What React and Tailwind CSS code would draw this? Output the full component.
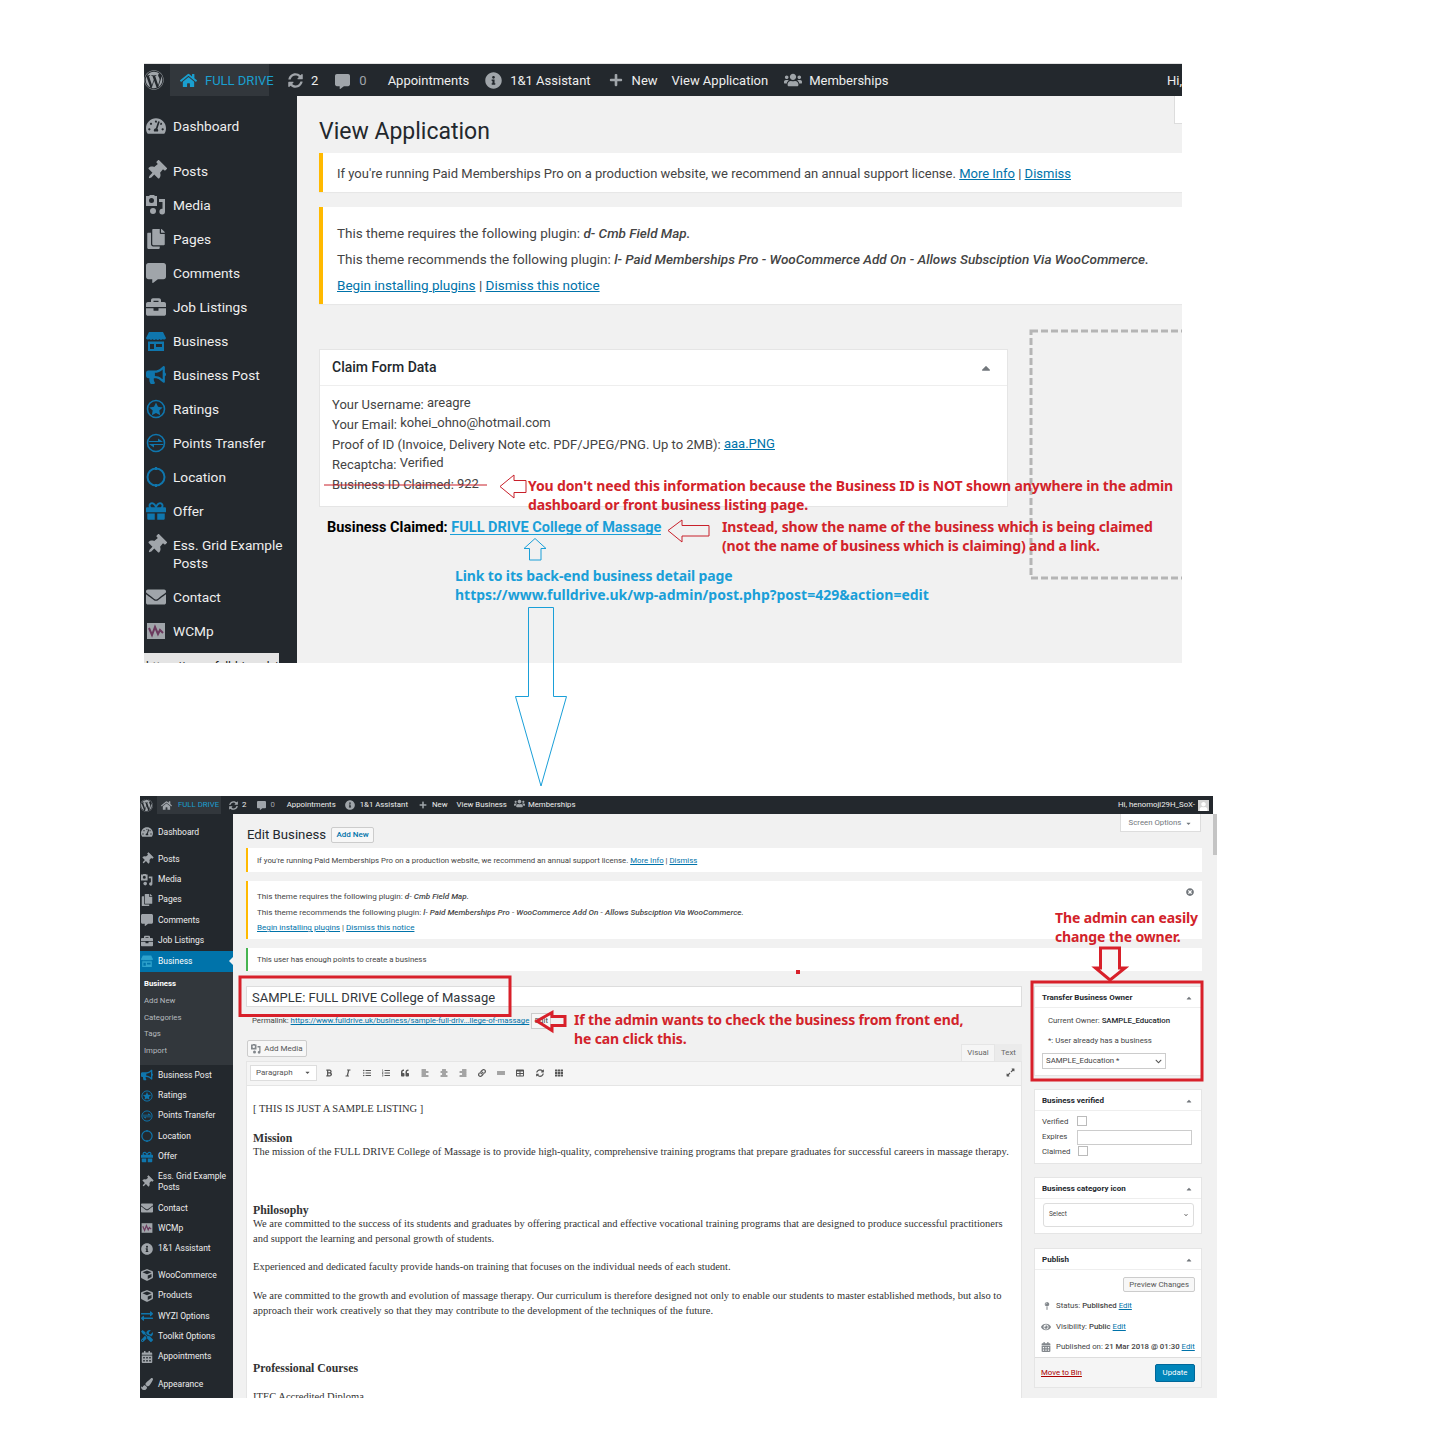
import React from "react";
import {
  FaWordpress, FaHome, FaSyncAlt, FaInfoCircle, FaPlus, FaUsers, FaTachometerAlt,
  FaThumbtack, FaCopy, FaCommentAlt, FaBriefcase, FaBullhorn, FaExchangeAlt,
  FaGift, FaEnvelope, FaCube, FaTools, FaCalendarAlt, FaPaintBrush, FaBold, FaItalic, FaListUl,
  FaListOl, FaQuoteLeft, FaAlignLeft, FaAlignCenter, FaAlignRight, FaLink, FaTable, FaTh,
  FaGripLines, FaExpandAlt, FaTimesCircle, FaEye, FaMapPin, FaCaretUp, FaCaretDown, FaChevronDown, FaUser,
} from "react-icons/fa";

function MediaIcon({ className }) {
  return (
    <svg viewBox="0 0 20 20" className={className} fill="currentColor">
      <path d="M0 1h3l1-1h4l1 1h2v10H0zM5.500 3a2.500 2.500 0 1 0 0 5 2.500 2.500 0 0 0 0-5z" fillRule="evenodd" />
      <circle cx="7" cy="16" r="3" />
      <path d="M13 4h6v12.500a2.800 2.800 0 1 1-2.500-2.700V7H13z" />
    </svg>
  );
}

function StoreIcon({ className }) {
  return (
    <svg viewBox="0 0 20 20" className={className} fill="currentColor">
      <path d="M3 1h14l3 6a2 2 0 0 1-3.300 1 2 2 0 0 1-3.300 0 2 2 0 0 1-3.400 0 2 2 0 0 1-3.400 0 2 2 0 0 1-3.300 0A2 2 0 0 1 0 7z" />
      <path d="M2 10.500h16V20H2zM4 13v5h4v-5zm6 0v3h6v-3z" fillRule="evenodd" />
    </svg>
  );
}

function WaveIcon({ className }) {
  return (
    <svg viewBox="0 0 20 20" className={className}>
      <rect x="1" y="2" width="18" height="16" fill="currentColor" />
      <path d="M3 7l3 7 3-8 3 7 2-4 3 3" fill="none" stroke="#6b3a5e" strokeWidth="2" />
    </svg>
  );
}

function RingIcon({ className, kind }) {
  return (
    <svg viewBox="0 0 20 20" className={className} fill="currentColor">
      <circle cx="10" cy="10" r="8.500" fill="none" stroke="currentColor" strokeWidth={kind === "loc" ? 2 : 1.600} />
      {kind === "star" && <path d="M10 3.500l2 4.300 4.700.6-3.400 3.200.9 4.700-4.200-2.300-4.200 2.300.9-4.700-3.400-3.200 4.700-.6z" />}
      {kind === "arrows" && <path d="M3 8h9V5.500l5 3.500H3zM17 12H8v2.500L3 11h14z" />}
      {kind === "loc" && <path d="M9 0h2v3H9zM9 17h2v3H9z" />}
    </svg>
  );
}

const gray = "text-[#a0a5aa]";
const blue = "text-[#0f76ad]";

const bigMenu = [
  { label: "Dashboard", Icon: FaTachometerAlt, color: gray, rowClass: "h-[34px] mt-[13px] mb-[11px]" },
  { label: "Posts", Icon: FaThumbtack, color: `${gray} rotate-45` },
  { label: "Media", Icon: MediaIcon, color: gray },
  { label: "Pages", Icon: FaCopy, color: gray },
  { label: "Comments", Icon: FaCommentAlt, color: gray },
  { label: "Job Listings", Icon: FaBriefcase, color: gray },
  { label: "Business", Icon: StoreIcon, color: blue },
  { label: "Business Post", Icon: FaBullhorn, color: blue },
  { label: "Ratings", Icon: RingIcon, kind: "star", color: blue },
  { label: "Points Transfer", Icon: RingIcon, kind: "arrows", color: blue },
  { label: "Location", Icon: RingIcon, kind: "loc", color: blue },
  { label: "Offer", Icon: FaGift, color: blue },
  { label: "Ess. Grid Example Posts", Icon: FaThumbtack, color: `${gray} rotate-45`, rowClass: "h-[52px] items-start !pt-[8px]" },
  { label: "Contact", Icon: FaEnvelope, color: gray },
  { label: "WCMp", Icon: WaveIcon, color: gray },
];

const smallTop = [
  { label: "Dashboard", Icon: FaTachometerAlt, color: gray, rowClass: "h-[20px] mt-[8px] mb-[7px]" },
  { label: "Posts", Icon: FaThumbtack, color: `${gray} rotate-45` },
  { label: "Media", Icon: MediaIcon, color: gray },
  { label: "Pages", Icon: FaCopy, color: gray },
  { label: "Comments", Icon: FaCommentAlt, color: gray },
  { label: "Job Listings", Icon: FaBriefcase, color: gray },
];

const smallBottom = [
  { label: "Business Post", Icon: FaBullhorn, color: blue },
  { label: "Ratings", Icon: RingIcon, kind: "star", color: blue },
  { label: "Points Transfer", Icon: RingIcon, kind: "arrows", color: blue },
  { label: "Location", Icon: RingIcon, kind: "loc", color: blue },
  { label: "Offer", Icon: FaGift, color: blue },
  { label: "Ess. Grid Example Posts", Icon: FaThumbtack, color: `${gray} rotate-45`, rowClass: "h-[31px]" },
  { label: "Contact", Icon: FaEnvelope, color: gray },
  { label: "WCMp", Icon: WaveIcon, color: gray },
  { label: "1&1 Assistant", Icon: FaInfoCircle, color: gray },
  { label: "WooCommerce", Icon: FaCube, color: gray, rowClass: "h-[20.4px] mt-[6px]" },
  { label: "Products", Icon: FaCube, color: gray },
  { label: "WYZI Options", Icon: FaExchangeAlt, color: blue },
  { label: "Toolkit Options", Icon: FaTools, color: blue },
  { label: "Appointments", Icon: FaCalendarAlt, color: gray },
  { label: "Appearance", Icon: FaPaintBrush, color: gray, rowClass: "h-[20.4px] mt-[7px]" },
];

function BigItem({ item }) {
  const { label, Icon, color, kind, rowClass } = item;
  return (
    <div className={`flex items-center text-[#eeeeee] text-[13.700px] leading-[18px] ${rowClass || "h-[34px]"}`}>
      <div className="w-[29px] h-[18px] shrink-0 flex items-center justify-center pr-[6px]">
        <Icon className={`w-[20px] h-[20px] shrink-0 ${color}`} kind={kind} />
      </div>
      <span>{label}</span>
    </div>
  );
}

function SmallItem({ item }) {
  const { label, Icon, color, kind, rowClass } = item;
  return (
    <div className={`flex items-center text-[#eeeeee] text-[8.500px] leading-[11px] ${rowClass || "h-[20.4px]"}`}>
      <div className="w-[18px] h-[11px] shrink-0 flex items-center justify-center pr-[4px]">
        <Icon className={`w-[12px] h-[12px] shrink-0 ${color}`} kind={kind} />
      </div>
      <span>{label}</span>
    </div>
  );
}

function BigBar() {
  return (
    <div className="h-[32px] bg-[#23282d] flex items-center text-[13px] text-[#eeeeee] shrink-0 whitespace-nowrap [&_span]:mt-[2px]">
      <FaWordpress className="w-[20px] h-[20px] text-[#a0a5aa] ml-0" />
      <div className="ml-[6px] w-[99px] h-[32px] bg-[#32373c] flex items-center text-[#1a9fcf]">
        <FaHome className="w-[17px] h-[17px] ml-[10px] shrink-0" />
        <span className="ml-[8px]">FULL DRIVE</span>
      </div>
      <FaSyncAlt className="w-[15px] h-[15px] ml-[19px] text-[#a0a5aa]" />
      <span className="ml-[8px]">2</span>
      <FaCommentAlt className="w-[15px] h-[15px] ml-[17px] mt-[2px] text-[#a0a5aa]" />
      <span className="ml-[9px] text-[#a0a5aa]">0</span>
      <span className="ml-[21px]">Appointments</span>
      <FaInfoCircle className="w-[17px] h-[17px] ml-[16px] text-[#a0a5aa]" />
      <span className="ml-[8px]">1&amp;1 Assistant</span>
      <FaPlus className="w-[14px] h-[14px] ml-[18px] text-[#a0a5aa]" />
      <span className="ml-[9px]">New</span>
      <span className="ml-[14px]">View Application</span>
      <FaUsers className="w-[18px] h-[18px] ml-[16px] text-[#a0a5aa]" />
      <span className="ml-[7px]">Memberships</span>
      <span className="ml-auto">Hi,</span>
    </div>
  );
}

function SmallBar() {
  return (
    <div className="h-[18px] bg-[#23282d] flex items-center text-[7.800px] text-[#eeeeee] shrink-0 whitespace-nowrap">
      <FaWordpress className="w-[13px] h-[13px] text-[#a0a5aa]" />
      <div className="ml-[4px] w-[64px] h-[18px] bg-[#32373c] flex items-center text-[#1a9fcf]">
        <FaHome className="w-[11px] h-[11px] ml-[4px] shrink-0 text-[#a0a5aa]" />
        <span className="ml-[6px]">FULL DRIVE</span>
      </div>
      <FaSyncAlt className="w-[9px] h-[9px] ml-[8px] text-[#a0a5aa]" />
      <span className="ml-[4px]">2</span>
      <FaCommentAlt className="w-[9px] h-[9px] ml-[11px] text-[#a0a5aa]" />
      <span className="ml-[4px] text-[#a0a5aa]">0</span>
      <span className="ml-[12px]">Appointments</span>
      <FaInfoCircle className="w-[10px] h-[10px] ml-[9px] text-[#a0a5aa]" />
      <span className="ml-[5px]">1&amp;1 Assistant</span>
      <FaPlus className="w-[8px] h-[8px] ml-[11px] text-[#a0a5aa]" />
      <span className="ml-[5px]">New</span>
      <span className="ml-[9px]">View Business</span>
      <FaUsers className="w-[11px] h-[11px] ml-[7px] -mt-[3px] text-[#a0a5aa]" />
      <span className="ml-[3px]">Memberships</span>
      <span className="ml-auto">Hi, henomoji29H_SoX-</span>
      <div className="ml-[3px] mr-[4px] w-[11px] h-[11px] bg-[#d5d5d5] flex items-end justify-center overflow-hidden">
        <FaUser className="w-[9px] h-[9px] text-white" />
      </div>
    </div>
  );
}

function TopFrame() {
  return (
    <div className="ml-[144px] w-[1038px] h-[600px] border-t border-[#e2e2e2] overflow-hidden flex flex-col">
      <BigBar />
      <div className="flex flex-1 min-h-0">
        <div className="w-[153px] shrink-0 bg-[#23282d]">
          {bigMenu.map((item) => (
            <BigItem key={item.label} item={item} />
          ))}
          <div className="mt-[5px] w-[135px] h-[20px] bg-[#e4e4e4] text-[#222] text-[12px] pt-[5px] pl-[2px] whitespace-nowrap">
            https://www.fulldrive.uk/
          </div>
        </div>
        <div className="flex-1 min-w-0 bg-[#f1f1f1] pl-[22px] text-[#444] text-[13.500px] relative">
          <div className="absolute right-0 top-0 w-[8px] h-[28px] bg-white border-l border-b border-[#ddd]" />
          <div className="h-[57px] pt-[15px] flex items-center text-[23px] text-[#23282d]">View Application</div>
          <div className="h-[39px] bg-white border-l-4 border-[#ffb900] pl-[14px] pt-[3px] flex items-center whitespace-nowrap text-[13px] shadow-[0_1px_1px_rgba(0,0,0,0.04)]">
            <span>
              If you're running Paid Memberships Pro on a production website, we recommend an annual support license.{" "}
              <a className="text-[#0073aa] underline">More Info</a> |{" "}
              <a className="text-[#0073aa] underline">Dismiss</a>
            </span>
          </div>
          <div className="mt-[15px] h-[97px] bg-white border-l-4 border-[#ffb900] pl-[14px] pt-[13px] leading-[26px] whitespace-nowrap shadow-[0_1px_1px_rgba(0,0,0,0.04)]">
            <p>This theme requires the following plugin: <em className="font-medium">d- Cmb Field Map.</em></p>
            <p>This theme recommends the following plugin: <em className="font-medium">l- Paid Memberships Pro - WooCommerce Add On - Allows Subsciption Via WooCommerce.</em></p>
            <p>
              <a className="text-[#0073aa] underline">Begin installing plugins</a> |{" "}
              <a className="text-[#0073aa] underline">Dismiss this notice</a>
            </p>
          </div>
          <div className="mt-[45px] w-[689px] h-[158px] bg-white border border-[#e5e5e5]">
            <div className="h-[36px] border-b border-[#eeeeee] px-[12px] flex items-center justify-between text-[14px] text-[#23282d] font-medium">
              <span>Claim Form Data</span>
              <FaCaretUp className="w-[14px] h-[14px] text-[#72777c] mr-[2px]" />
            </div>
            <div className="pt-[9px] pl-[12px] text-[13px] leading-[20px] whitespace-nowrap">
              <p>Your Username: <span className="relative -top-[2px]">areagre</span></p>
              <p>Your Email: <span className="relative -top-[2px]">kohei_ohno@hotmail.com</span></p>
              <p>
                Proof of ID (Invoice, Delivery Note etc. PDF/JPEG/PNG. Up to 2MB):{" "}
                <a className="relative -top-[1px] text-[#0073aa] underline">aaa.PNG</a>
              </p>
              <p>Recaptcha: <span className="relative -top-[2px]">Verified</span></p>
              <p>Business ID Claimed: <span className="relative -top-[1px]">922</span></p>
            </div>
          </div>
          <p className="ml-[8px] mt-[11px] text-[14.500px] leading-[20px] font-bold text-black whitespace-nowrap">
            Business Claimed: <span className="text-[#1a9fd8]">FULL DRIVE College of Massage</span>
          </p>
        </div>
      </div>
    </div>
  );
}

function Card({ title, className, children }) {
  return (
    <div className={`bg-white border border-[#e5e5e5] ${className}`}>
      <div className="h-[21px] border-b border-[#eeeeee] pl-[7px] pr-[8px] pt-px flex items-center justify-between text-[8px] font-bold text-[#23282d]">
        <span>{title}</span>
        <FaCaretUp className="w-[8px] h-[8px] text-[#72777c]" />
      </div>
      {children}
    </div>
  );
}

function EditorToolbar() {
  const icons = [FaBold, FaItalic, FaListUl, FaListOl, FaQuoteLeft, FaAlignLeft, FaAlignCenter, FaAlignRight, FaLink, FaGripLines, FaTable, FaSyncAlt, FaTh];
  return (
    <div className="h-[25px] bg-[#f5f5f5] border border-[#e5e5e5] pb-[2px] flex items-center pl-[3px] pr-[6px] text-[#555]">
      <div className="w-[67px] h-[16px] bg-white border border-[#ddd] flex items-center justify-between px-[5px] text-[8px]">
        <span>Paragraph</span>
        <FaCaretDown className="w-[7px] h-[7px]" />
      </div>
      <div className="flex ml-[2px]">
        {icons.map((Icon, idx) => (
          <div key={idx} className="w-[19.200px] flex justify-center">
            <Icon className="w-[8px] h-[8px]" />
          </div>
        ))}
      </div>
      <FaExpandAlt className="ml-auto w-[9px] h-[9px]" />
    </div>
  );
}

function EditorBody() {
  return (
    <div className="flex-1 min-h-0 overflow-hidden bg-white border-x border-[#e5e5e5] pl-[6px] pt-[16px] font-['Liberation_Serif',serif] text-[10.500px] leading-[14.400px] text-[#333] whitespace-nowrap">
      <p>[ THIS IS JUST A SAMPLE LISTING ]</p>
      <p className="mt-[14.400px] font-bold text-[11.800px]">Mission</p>
      <p>The mission of the FULL DRIVE College of Massage is to provide high-quality, comprehensive training programs that prepare graduates for successful careers in massage therapy.</p>
      <p className="mt-[43.200px] font-bold text-[11.800px]">Philosophy</p>
      <p>
        We are committed to the success of its students and graduates by offering practical and effective vocational training programs that are designed to produce successful practitioners
        <br />
        and support the learning and personal growth of students.
      </p>
      <p className="mt-[14.400px]">Experienced and dedicated faculty provide hands-on training that focuses on the individual needs of each student.</p>
      <p className="mt-[14.400px]">
        We are committed to the growth and evolution of massage therapy. Our curriculum is therefore designed not only to enable our students to master established methods, but also to
        <br />
        approach their work creatively so that they may contribute to the development of the techniques of the future.
      </p>
      <p className="mt-[43.200px] font-bold text-[11.800px]">Professional Courses</p>
      <p className="mt-[14.400px]">ITEC Accredited Diploma</p>
    </div>
  );
}

function SideColumn() {
  return (
    <div className="w-[168px] shrink-0 text-[7.800px] text-[#444] whitespace-nowrap">
      <Card title="Transfer Business Owner" className="h-[90px]">
        <div className="pl-[13px] pt-[8px] leading-[10px]">
          <p>Current Owner: <span className="text-[#23282d] font-medium">SAMPLE_Education</span></p>
          <p className="mt-[10px]">*: User already has a business</p>
        </div>
        <div className="mt-[7px] ml-[7px] w-[124px] h-[16px] border border-[#ccc] flex items-center justify-between px-[3px]">
          <span>SAMPLE_Education *</span>
          <FaChevronDown className="w-[7px] h-[7px] text-[#555]" />
        </div>
      </Card>
      <Card title="Business verified" className="mt-[13px] h-[75px]">
        <div className="pl-[7px] pt-[4px] leading-[14px]">
          <div className="flex items-center h-[14px]">
            <span>Verified</span>
            <div className="ml-[9px] -mt-[2px] w-[10px] h-[10px] border border-[#bbb]" />
          </div>
          <div className="flex items-center h-[16px]">
            <span>Expires</span>
            <div className="ml-[10px] w-[115px] h-[15px] border border-[#ccc]" />
          </div>
          <div className="flex items-center h-[13px]">
            <span>Claimed</span>
            <div className="ml-[8px] -mt-[2px] w-[10px] h-[10px] border border-[#bbb]" />
          </div>
        </div>
      </Card>
      <Card title="Business category icon" className="mt-[13px] h-[57px]">
        <div className="mt-[4px] ml-[8px] w-[151px] h-[24px] border border-[#ddd] rounded-[3px] flex items-center justify-between px-[5px] text-[6.500px]">
          <span>Select</span>
          <FaChevronDown className="w-[4px] h-[4px] text-[#555]" />
        </div>
      </Card>
      <Card title="Publish" className="mt-[14px] h-[140px] relative">
        <div className="flex justify-end pr-[6px] pt-[7px]">
          <div className="h-[15px] px-[5px] bg-[#f7f7f7] border border-[#ccc] rounded-[2px] flex items-center text-[#555]">Preview Changes</div>
        </div>
        <div className="mt-[9px] pl-[7px] flex items-center h-[10px]">
          <FaMapPin className="w-[8px] h-[8px] text-[#82878c] ml-[1px]" />
          <span className="ml-[5px]">Status: <b className="font-medium">Published</b> <a className="text-[#0073aa] underline">Edit</a></span>
        </div>
        <div className="mt-[11px] pl-[6px] flex items-center h-[10px]">
          <FaEye className="w-[10px] h-[10px] text-[#82878c]" />
          <span className="ml-[5px]">Visibility: <b className="font-medium">Public</b> <a className="text-[#0073aa] underline">Edit</a></span>
        </div>
        <div className="mt-[10px] pl-[6px] flex items-center h-[10px]">
          <FaCalendarAlt className="w-[10px] h-[10px] text-[#82878c]" />
          <span className="ml-[5px]">Published on: <b className="font-medium">21 Mar 2018 @ 01:30</b> <a className="text-[#0073aa] underline">Edit</a></span>
        </div>
        <div className="absolute left-0 right-0 bottom-0 h-[30px] bg-[#f5f5f5] border-t border-[#dddddd] flex items-center justify-between pl-[6px] pr-[6px]">
          <a className="text-[#a00] underline">Move to Bin</a>
          <div className="w-[40px] h-[18px] bg-[#0085ba] border border-[#006799] rounded-[2px] text-white flex items-center justify-center">Update</div>
        </div>
      </Card>
    </div>
  );
}

function BottomFrame() {
  return (
    <div className="ml-[140px] mt-[133px] w-[1077px] h-[602px] overflow-hidden flex">
      <div className="w-[1073px] shrink-0 flex flex-col">
        <SmallBar />
        <div className="flex flex-1 min-h-0">
          <div className="w-[93px] shrink-0 bg-[#23282d]">
            {smallTop.map((item) => (
              <SmallItem key={item.label} item={item} />
            ))}
            <div className="h-[21px] bg-[#0073aa] relative flex items-center text-white text-[8.500px]">
              <div className="w-[18px] flex items-center justify-center pr-[4px]">
                <StoreIcon className="w-[12px] h-[12px] text-[#2ea2cc]" />
              </div>
              <span>Business</span>
              <div className="absolute right-0 top-[6px] border-y-[4px] border-y-transparent border-r-[4px] border-r-[#f1f1f1]" />
            </div>
            <div className="h-[93px] bg-[#32373c] pl-[4px] pt-[4px] text-[7.800px] leading-[16.800px] text-[#b4b9be]">
              <p className="font-bold text-white">Business</p>
              <p>Add New</p>
              <p>Categories</p>
              <p>Tags</p>
              <p>Import</p>
            </div>
            {smallBottom.map((item) => (
              <SmallItem key={item.label} item={item} />
            ))}
          </div>
          <div className="flex-1 min-w-0 bg-[#f1f1f1] pl-[13px] pr-[11px] text-[7.800px] text-[#444] flex flex-col">
            <div className="h-[34px] flex shrink-0">
              <span className="mt-[12px] ml-px text-[13.200px] leading-[18px] text-[#23282d]">Edit Business</span>
              <div className="ml-[5px] mt-[13px] h-[16px] w-[43px] border border-[#ccc] bg-[#f7f7f7] rounded-[2px] flex items-center justify-center text-[8px] font-medium text-[#0073aa]">Add New</div>
              <div className="ml-auto mr-[1px] w-[81px] h-[18px] pt-px bg-white border border-[#ddd] border-t-0 flex items-center justify-center gap-[4px] text-[#72777c]">
                <span>Screen Options</span>
                <FaCaretDown className="w-[7px] h-[7px]" />
              </div>
            </div>
            <div className="h-[24px] shrink-0 bg-white border-l-2 border-[#ffb900] pl-[9px] pt-[2px] flex items-center whitespace-nowrap">
              <span>
                If you're running Paid Memberships Pro on a production website, we recommend an annual support license.{" "}
                <a className="text-[#0073aa] underline">More Info</a> | <a className="text-[#0073aa] underline">Dismiss</a>
              </span>
            </div>
            <div className="mt-[9px] h-[58px] shrink-0 bg-white border-l-2 border-[#ffb900] pl-[9px] pt-[8px] text-[8.100px] leading-[15.500px] whitespace-nowrap relative">
              <p>This theme requires the following plugin: <em className="font-medium">d- Cmb Field Map.</em></p>
              <p>This theme recommends the following plugin: <em className="font-medium">l- Paid Memberships Pro - WooCommerce Add On - Allows Subsciption Via WooCommerce.</em></p>
              <p>
                <a className="text-[#0073aa] underline">Begin installing plugins</a> | <a className="text-[#0073aa] underline">Dismiss this notice</a>
              </p>
              <FaTimesCircle className="absolute right-[8px] top-[7px] w-[8px] h-[8px] text-[#72777c]" />
            </div>
            <div className="mt-[9px] h-[23px] shrink-0 bg-white border-l-2 border-[#46b450] pl-[9px] flex items-center">
              This user has enough points to create a business
            </div>
            <div className="mt-[15px] flex gap-[12px] flex-1 min-h-0">
              <div className="w-[776px] shrink-0 flex flex-col">
                <div className="h-[21px] shrink-0 bg-white border border-[#ddd] pl-[5px] pt-[3px] flex items-center text-[13px] text-[#32373c]">
                  SAMPLE: FULL DRIVE College of Massage
                </div>
                <div className="mt-[6px] h-[16px] shrink-0 pl-[6px] flex items-center whitespace-nowrap">
                  <span>Permalink: <a className="text-[#0073aa] underline">https://www.fulldrive.uk/business/sample-full-driv...llege-of-massage</a></span>
                  <div className="ml-[2px] w-[20px] h-[16px] border border-[#ccc] bg-[#f7f7f7] flex items-center justify-center">Edit</div>
                </div>
                <div className="mt-[11px] h-[21px] shrink-0 flex justify-between items-start pl-px">
                  <div className="h-[17px] w-[60px] border border-[#ccc] bg-[#f7f7f7] rounded-[2px] flex items-center justify-center gap-[3px] text-[#555] text-[8px]">
                    <MediaIcon className="w-[10px] h-[10px] text-[#82878c]" />
                    <span>Add Media</span>
                  </div>
                  <div className="flex mt-[4px] h-[17px] text-[#666]">
                    <div className="w-[34px] bg-[#f5f5f5] border border-[#e5e5e5] border-b-0 flex items-center justify-center">Visual</div>
                    <div className="w-[27px] bg-[#ebebeb] flex items-center justify-center">Text</div>
                  </div>
                </div>
                <EditorToolbar />
                <EditorBody />
              </div>
              <SideColumn />
            </div>
          </div>
        </div>
      </div>
      <div className="flex-1 mt-[18px] bg-[#f1f1f1]">
        <div className="h-[41px] bg-[#c4c4c4]" />
      </div>
    </div>
  );
}

// arrows and marks drawn over both screenshots
function Marks() {
  return (
    <svg viewBox="0 0 1444 1448" className="absolute inset-0 w-[1444px] h-[1448px] pointer-events-none" fill="none">
      <path d="M324 485H487" stroke="#c8202a" strokeWidth="1" />
      <path d="M500 486.500L514 475V480.500H526V492.500H514V498Z" stroke="#c8202a" strokeWidth="1" fill="#ffffff" />
      <path d="M668 530.500L682 520V525.500H709V536H682V542Z" stroke="#c8202a" strokeWidth="1" fill="#f1f1f1" />
      <path d="M450 534.500H661" stroke="#1a9fd8" strokeWidth="1" />
      <path d="M535 538.500L546 548.500H541V560H529.500V548.500H524Z" stroke="#1a9fd8" strokeWidth="1" />
      <path d="M528.500 607.500H553.500V696.500H566.500L541 786L515.500 696.500H528.500Z" stroke="#1a9fd8" strokeWidth="1" />
      <path d="M537 1021L552 1012.500V1016.500H565V1025.500H552V1030.500Z" stroke="#d8202a" strokeWidth="3" />
      <path d="M1100.500 948H1119.500V968H1125L1110 980L1095.500 968H1100.500Z" stroke="#d8202a" strokeWidth="3" fill="#f8f8f8" />
      <rect x="796" y="970" width="4" height="4" fill="#d8202a" />
      <rect x="1031" y="331" width="160" height="247" stroke="#b5b5b5" strokeWidth="3" strokeDasharray="7 3" />
      <rect x="1182" y="320" width="12" height="270" fill="#ffffff" />
      <rect x="240" y="977" width="270" height="38.500" stroke="#d8202a" strokeWidth="3" />
      <rect x="1032" y="982" width="170" height="98" stroke="#d8202a" strokeWidth="3" />
    </svg>
  );
}

function Note({ className, children }) {
  return (
    <p className={`absolute whitespace-nowrap font-['Noto_Sans',sans-serif] font-bold text-[14px] tracking-[-0.130px] leading-[19px] ${className}`}>
      {children}
    </p>
  );
}

export default function App() {
  return (
    <div className="relative w-[1444px] h-[1448px] bg-white overflow-hidden pt-[63px] font-['Roboto',sans-serif]">
      <TopFrame />
      <BottomFrame />
      <Marks />
      <Note className="left-[528px] top-[476px] text-[#d2232a]">
        You don't need this information because the Business ID is NOT shown anywhere in the admin
        <br />
        dashboard or front business listing page.
      </Note>
      <Note className="left-[722px] top-[517px] text-[#d2232a]">
        Instead, show the name of the business which is being claimed
        <br />
        (not the name of business which is claiming) and a link.
      </Note>
      <Note className="left-[455px] top-[566px] text-[#1a9fd8]">
        Link to its back-end business detail page
        <br />
        <span className="tracking-[0px]">https://www.fulldrive.uk/wp-admin/post.php?post=429&amp;action=edit</span>
      </Note>
      <Note className="left-[574px] top-[1010px] text-[#d2232a]">
        If the admin wants to check the business from front end,
        <br />
        he can click this.
      </Note>
      <Note className="left-[1055px] top-[908px] text-[#d2232a]">
        The admin can easily
        <br />
        change the owner.
      </Note>
    </div>
  );
}
